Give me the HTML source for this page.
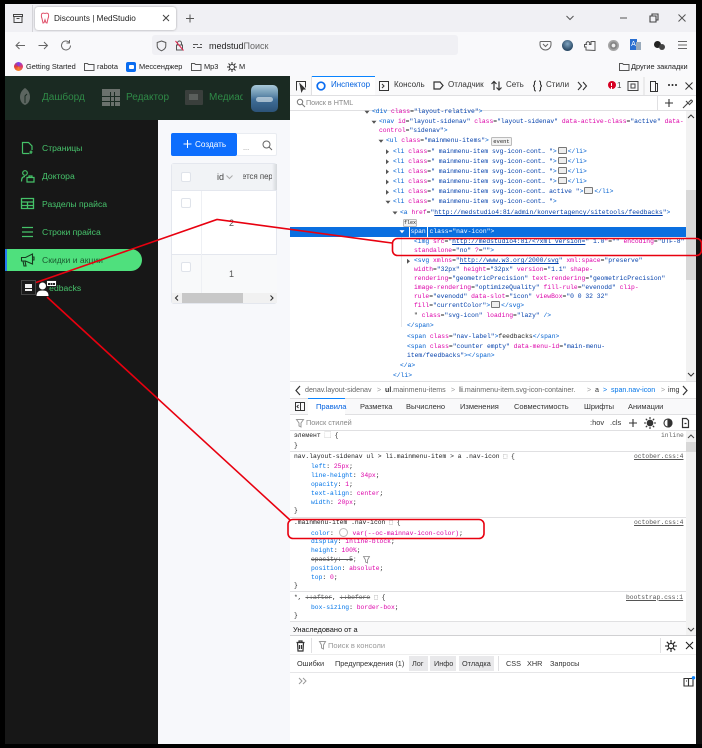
<!DOCTYPE html>
<html lang="ru"><head><meta charset="utf-8"><title>Discounts | MedStudio</title>
<style>
html,body{margin:0;padding:0;background:#000;width:702px;height:748px;overflow:hidden}
#p{position:relative;width:702px;height:748px;overflow:hidden;font-family:"Liberation Sans","Noto Sans CJK SC",sans-serif;filter:blur(.25px)}
.b{position:absolute}
.t{position:absolute;white-space:nowrap;line-height:10px;font-size:7.4px;color:#333}
.m{position:absolute;white-space:nowrap;line-height:10px;height:10px;font:6.35px/10px "Liberation Mono",monospace;color:#222}
.n{color:#0060d0}.a{color:#dd00a9}.v{color:#003eaa}.u{text-decoration:underline;color:#003eaa}.g{color:#666}
.bl{color:#0074e8}
.x{display:inline-block;width:7px;height:5px;border:.7px solid #777;border-radius:1px;background:#eee;vertical-align:-1px;margin:0 1px}
.side{position:absolute;left:42px;font-size:8.6px;line-height:12px;color:#47c46c;white-space:nowrap}
.top{position:absolute;font-size:10px;line-height:12px;color:#2f8a47;white-space:nowrap}
svg{position:absolute;overflow:visible}
.c{position:absolute;background:#fff;border:1px solid #dfe3ea;border-radius:2px;width:8px;height:8px}
.sep{position:absolute;left:290px;width:396px;height:1px;background:#e0e0e2}
.dt{font-size:8px;top:80px}
.bc{font-size:7.1px;top:385px;color:#666}
.rt{font-size:7.5px;top:402px}
.cf{font-size:7.3px;top:659px}
</style></head><body><div id="p">

<!-- browser chrome -->
<div class="b" style="left:5px;top:4px;width:691px;height:28px;background:#f0f0f4"></div>
<div class="b" style="left:5px;top:32px;width:691px;height:44px;background:#f9f9fb"></div>
<div class="b" style="left:32px;top:5px;width:1px;height:27px;background:#d4d4d8"></div>
<div class="b" style="left:152px;top:35px;width:306px;height:20px;background:#f0f0f4;border-radius:3px"></div>
<svg style="left:0;top:0" width="702" height="76" fill="none" stroke="#444" stroke-width="1">
 <path d="M13.500 14.500h9v2h-9zM14 16.500v6h8v-6M16.500 18.500h3"/>
 <path d="M186 18.500h8M190 14.500v8" stroke="#555"/>
 <path d="M566.500 16l3.500 3.500 3.500-3.500" stroke="#555"/>
 <path d="M620 18h7" stroke="#555"/>
 <path d="M650 16h6v6h-6zM652 16v-2h6v6h-2" stroke="#444" stroke-width="1.100"/>
 <path d="M678.500 14.500l7 7M685.500 14.500l-7 7" stroke="#555"/>
 <path d="M25 45.500h-9M19.500 42l-3.500 3.500 3.500 3.500M38.500 45.500h9M44 42l3.500 3.500-3.500 3.500" stroke="#666"/>
 <path d="M70.500 45.500a4.500 4.500 0 1 1-1.500-3.400M69.500 40v3h-3" stroke="#666"/>
 <path d="M161.500 41l4.300 1.500v3.500c0 2.500-2 3.800-4.300 4.800-2.300-1-4.300-2.300-4.300-4.800v-3.500z" stroke="#555"/>
 <path d="M176.500 45h6v5h-6zM177.500 45v-2a2 2 0 0 1 4 0v2" stroke="#555"/>
 <path d="M175.500 41l8 9.500" stroke="#e22850"/>
 <path d="M193 44.500h5M200 44.500h2M193 47.500h2M197 47.500h5" stroke="#555"/>
 <path d="M541 41.500h9a1 1 0 0 1 1 1v2a5.500 5.500 0 0 1-11 0v-2a1 1 0 0 1 1-1zM543 44l2.500 2.500 2.500-2.500" stroke="#666"/>
 <path d="M586 50v-3h-1.500v-2.500h2a1.800 1.800 0 1 1 3 0h1.500v-3h4v9z" stroke="#555"/>
 <path d="M678 41.500h9M678 45h9M678 48.500h9" stroke="#666"/>
</svg>
<div class="b" style="left:35px;top:7px;width:141px;height:23px;background:#fff;border-radius:3px;box-shadow:0 0 2px rgba(0,0,0,.35)"></div>
<svg style="left:40px;top:12px" width="10" height="13" fill="none" stroke="#e0506a" stroke-width="1"><path d="M2 1.500c1.500-.8 2-.3 3 0 1-.3 1.500-.8 3 0 1 1 .7 3.500 0 5l-1 4.500-1-.3-1-3-1 3-1 .3-1-4.500c-.7-1.500-1-4 0-5z"/></svg>
<div class="t" style="left:54px;top:14px;font-size:8.200px;line-height:10px;color:#222">Discounts | MedStudio</div>
<svg style="left:162px;top:14px" width="9" height="9" fill="none" stroke="#444" stroke-width="1"><path d="M1 1l6 6M7 1l-6 6"/></svg>

<div class="t" style="left:209px;top:41px;font-size:9px;color:#222">medstud<span style="color:#666">Поиск</span></div>
<div class="b" style="left:562px;top:40px;width:11px;height:11px;border-radius:50%;background:radial-gradient(circle at 50% 35%,#7fa3c0,#2b4a66 70%)"></div>
<div class="b" style="left:608px;top:40px;width:11px;height:11px;border-radius:50%;background:radial-gradient(circle,#eee 0 20%,#777 30%,#aaa 60%,#888)"></div>
<div class="b" style="left:630px;top:39px;width:7px;height:11px;background:#2a6fd0;color:#fff;font-size:7px;line-height:11px;text-align:center">A</div>
<div class="b" style="left:636px;top:42px;width:5px;height:8px;background:#9ab;"></div>
<div class="b" style="left:654px;top:41px;width:7px;height:7px;border-radius:50%;background:#222"></div>
<div class="b" style="left:659px;top:44px;width:6px;height:6px;border-radius:50%;background:#444"></div>

<div class="b" style="left:14px;top:62px;width:9px;height:9px;border-radius:50%;background:conic-gradient(#7b3ff2,#e23a6a,#f58a2a,#e23a3a,#7b3ff2)"></div>
<div class="t" style="left:26px;top:62px;color:#222">Getting Started</div>
<svg style="left:84px;top:62px" width="11" height="10" fill="none" stroke="#555"><path d="M.5 8.500v-7h3l1 1h5.500v6z"/></svg>
<div class="t" style="left:97px;top:62px;color:#222">rabota</div>
<div class="b" style="left:126px;top:62px;width:10px;height:10px;border-radius:2px;background:#0a6cf0"></div>
<div class="b" style="left:128.500px;top:64.500px;width:5px;height:4px;background:#fff;border-radius:1px"></div>
<div class="t" style="left:139px;top:62px;color:#222">Мессенджер</div>
<svg style="left:191px;top:62px" width="11" height="10" fill="none" stroke="#555"><path d="M.5 8.500v-7h3l1 1h5.500v6z"/></svg>
<div class="t" style="left:204px;top:62px;color:#222">Mp3</div>
<svg style="left:227px;top:62px" width="10" height="10" fill="none" stroke="#333"><circle cx="5" cy="5" r="2.500"/><path d="M5 0v2M5 8v2M0 5h2M8 5h2M1.500 1.500l1.500 1.500M7 7l1.500 1.500M8.500 1.500L7 3M3 7L1.500 8.500"/></svg>
<div class="t" style="left:239px;top:62px;color:#222">M</div>
<svg style="left:619px;top:62px" width="11" height="10" fill="none" stroke="#555"><path d="M.5 8.500v-7h3l1 1h5.500v6z"/></svg>
<div class="t" style="left:631px;top:62px;color:#222">Другие закладки</div>

<!-- app -->
<div class="b" style="left:5px;top:76px;width:285px;height:44px;background:#1a2a22"></div>
<div class="b" style="left:5px;top:120px;width:153px;height:624px;background:#171717"></div>
<div class="b" style="left:158px;top:120px;width:132px;height:624px;background:#f7f8fb"></div>

<svg style="left:20px;top:87px" width="10" height="20"><path d="M5 1c3 2 5 5 5 9s-2 7-5 8c-3-1-5-4-5-8s2-7 5-9z" fill="#5c6560"/><path d="M5 16V9l2-2" stroke="#1a2a22" fill="none"/></svg>
<div class="top" style="left:42px;top:92px">Дашборд</div>
<div class="b" style="left:102px;top:89px;width:18px;height:17px;background:#6b716d"></div>
<div class="b" style="left:110px;top:92px;width:1px;height:14px;background:#1a2a22"></div>
<div class="b" style="left:114px;top:92px;width:1px;height:14px;background:#1a2a22"></div>
<div class="b" style="left:102px;top:96px;width:18px;height:1px;background:#1a2a22"></div>
<div class="b" style="left:102px;top:101px;width:18px;height:1px;background:#1a2a22"></div>
<div class="top" style="left:126px;top:92px">Редактор</div>
<div class="b" style="left:185px;top:90px;width:18px;height:15px;background:#3a3f3c;border-radius:1px"></div>
<div class="b" style="left:189px;top:94px;width:9px;height:6px;background:#5a5f5c"></div>
<div class="b" style="left:209px;top:90px;width:34px;height:16px;overflow:hidden"><div class="top" style="left:0;top:2px">Медиафайлы</div></div>
<div class="b" style="left:251px;top:85px;width:27px;height:27px;border-radius:5px;background:linear-gradient(#a8c8d8 0,#6a93b0 35%,#3f6d96 55%,#2c5378 100%)"></div>
<div class="b" style="left:256px;top:97px;width:17px;height:5px;border-radius:3px;background:#cfdde6;opacity:.7"></div>

<!-- side menu -->
<svg style="left:0;top:120px" width="40" height="180" fill="none" stroke="#45c268" stroke-width="1.200">
 <path d="M22.500 33.500v-11h6l3.500 3.500v4M22.500 33.500h7M31 30.500v3.500M29.500 32h3"/>
 <circle cx="25" cy="53" r="2.300"/>
 <path d="M21.500 61.500c0-3.500 1.500-5 3.500-5M27 57.500h7v4.500h-7zM29 57.500V56h3v1.500"/>
 <path d="M21.500 78.500h12v10h-12zM21.500 82h12M21.500 85.500h12M27.500 82v6.500" stroke-width="1.300"/>
 <path d="M22 107.500h11M22 112h11M22 116.500h11" stroke-width="1.300"/>
</svg>
<div class="side" style="top:142px">Страницы</div>
<div class="side" style="top:170px">Доктора</div>
<div class="side" style="top:198px">Разделы прайса</div>
<div class="side" style="top:226px">Строки прайса</div>
<div class="b" style="left:5px;top:249px;width:137px;height:22px;background:#4fe07d;border-radius:0 11px 11px 0"></div>
<div class="b" style="left:5px;top:249px;width:2px;height:22px;background:#2478f0"></div>
<svg style="left:20px;top:253px" width="15" height="15" fill="none" stroke="#17391f" stroke-width="1.100"><path d="M1.500 4.500h4l7-3.500v10l-7-3h-4zM3 8l1 5h2l-1-5M12.500 4h1.500v3h-1.500"/></svg>
<div class="side" style="top:254px;color:#1b5a30">Скидки и акции</div>
<div class="side" style="top:282px">feedbacks</div>

<!-- pasted icons over feedbacks -->
<div class="b" style="left:21px;top:280px;width:15px;height:15px;background:#1a1a1a;border:1px solid #444;box-sizing:border-box"></div>
<div class="b" style="left:25px;top:284px;width:7px;height:7px;background:#f0f0f0"></div>
<div class="b" style="left:25px;top:288px;width:7px;height:1px;background:#222"></div>
<div class="b" style="left:36px;top:280px;width:13px;height:17px;background:#1a1a1a"></div>
<svg style="left:36px;top:282px" width="14" height="15"><circle cx="6.500" cy="4" r="3.500" fill="#fff"/><path d="M.5 14c0-4 2-5.500 6-5.500s6 1.500 6 5.500z" fill="#fff"/></svg>
<div class="b" style="left:46px;top:280px;width:11px;height:7px;background:#fff;border-radius:1px;border:1px solid #222;box-sizing:border-box"></div>
<div class="b" style="left:48px;top:283px;width:1.500px;height:1.500px;background:#222;box-shadow:2.500px 0 #222,5px 0 #222"></div>

<!-- content -->
<div class="b" style="left:171px;top:133px;width:66px;height:23px;background:#0d6efd;border-radius:2px"></div>
<svg style="left:183px;top:140px" width="9" height="9" stroke="#fff" stroke-width="1"><path d="M4.500 0v8M.5 4h8"/></svg>
<div class="t" style="left:195px;top:140px;color:#fff;font-size:8.200px">Создать</div>
<div class="b" style="left:237px;top:133px;width:40px;height:23px;background:#fff;border:1px solid #e9ecf1;border-left:0;box-sizing:border-box;border-radius:0 2px 2px 0"></div>
<div class="t" style="left:243px;top:143px;color:#888">...</div>
<svg style="left:262px;top:140px" width="11" height="11" fill="none" stroke="#666"><circle cx="4.500" cy="4.500" r="3.500"/><path d="M7 7l3 3"/></svg>

<div class="b" style="left:171px;top:163px;width:106px;height:141px;background:#fff;border:1px solid #e4e7ee;box-sizing:border-box;border-radius:3px"></div>
<div class="b" style="left:172px;top:164px;width:105px;height:26px;background:#f1f3f6"></div>
<div class="b" style="left:172px;top:190px;width:105px;height:1px;background:#e4e7ee"></div>
<div class="b" style="left:172px;top:255px;width:105px;height:38px;background:#f8f9fa"></div>
<div class="b" style="left:172px;top:254px;width:105px;height:1px;background:#e4e7ee"></div>
<div class="b" style="left:201px;top:191px;width:1px;height:102px;background:#eef0f4"></div>
<div class="b" style="left:272px;top:164px;width:5px;height:26px;background:linear-gradient(90deg,#f1f3f6,#d4d7db)"></div>
<div class="c" style="left:181px;top:172px"></div>
<div class="c" style="left:181px;top:198px"></div>
<div class="c" style="left:181px;top:262px"></div>
<div class="t" style="left:217px;top:172px;font-size:9px;color:#444">id</div>
<svg style="left:226px;top:175px" width="8" height="5" fill="none" stroke="#aaa"><path d="M.5.500l3 3 3-3"/></svg>
<div class="b" style="left:243px;top:171px;width:29px;height:12px;overflow:hidden"><div class="t" style="left:-1px;top:1px;font-size:7.800px;color:#444">ется перв</div></div>
<div class="t" style="left:229px;top:218px;font-size:9px;color:#555">2</div>
<div class="t" style="left:229px;top:269px;font-size:9px;color:#555">1</div>
<div class="b" style="left:172px;top:293px;width:105px;height:10px;background:#f1f1f1"></div>
<div class="b" style="left:182px;top:293px;width:61px;height:10px;background:#c8c8c8"></div>
<svg style="left:173px;top:294px" width="104" height="8" fill="none" stroke="#333" stroke-width="1.100"><path d="M5 1.500L2.500 4 5 6.500M97.500 1.500L100 4l-2.500 2.500"/></svg>

<!-- devtools -->
<div class="b" style="left:290px;top:76px;width:406px;height:668px;background:#fff"></div>
<div class="b" style="left:290px;top:76px;width:406px;height:19px;background:#f9f9fa"></div>
<div class="b" style="left:290px;top:95px;width:406px;height:1px;background:#e0e0e2"></div>
<div class="b" style="left:311px;top:76px;width:64px;height:19px;background:#fff;border-top:1px solid #0a84ff;box-sizing:border-box"></div>
<div class="b" style="left:311px;top:76px;width:1px;height:19px;background:#e0e0e2"></div>
<svg style="left:290px;top:76px" width="406" height="34" fill="none" stroke="#333" stroke-width="1">
 <path d="M6.500 14.500v-9h9v6"/><path d="M10 8l5 5-2.200.2-1.200 2.300z" fill="#333"/>
 <circle cx="31" cy="10" r="3.800" stroke="#0a6cf0" stroke-width="1.700"/>
 <path d="M89.500 5.500h9v9h-9zM92 8l2 2-2 2"/>
 <path d="M144 6h6l3 3.500-3 3.500h-6z" stroke-width="1.200"/>
 <path d="M204 14V5.500M201.500 8l2.500-2.500L206.500 8M209 5.500V14M206.500 11.500l2.500 2.500 2.500-2.500" stroke-width="1.200"/>
 <path d="M246 5c-2 0-1.500 2-1.500 3s-1 1.500-1 2 1 .8 1 2-.5 3 1.500 3M249 5c2 0 1.500 2 1.500 3s1 1.500 1 2-1 .8-1 2 .5 3-1.500 3" stroke-width="1.100"/>
 <path d="M288 6l3.500 4-3.500 4M293 6l3.500 4-3.500 4" stroke-width="1.100"/>
 <path d="M338 5.500h10v9h-10zM341 8h4v4h-4z" stroke="#444"/>
 <path d="M354 1v18" stroke="#ddd"/>
 <path d="M360.500 5.500h5v10h-5zM365.500 7.500h2v8h-2"/>
 <path d="M395.500 6.500l7 7M402.500 6.500l-7 7"/>
</svg>
<div class="b" style="left:607.500px;top:81px;width:8px;height:8px;border-radius:50%;background:#d70022"></div>
<div class="b" style="left:611px;top:82.500px;width:1px;height:3px;background:#fff;box-shadow:0 4px #fff"></div>
<div class="t" style="left:617px;top:81px;font-size:8px;color:#444">1</div>
<div class="b" style="left:668px;top:84px;width:2px;height:2px;border-radius:50%;background:#222;box-shadow:3.500px 0 #222,7px 0 #222"></div>
<div class="t dt" style="left:331px;color:#0060df">Инспектор</div>
<div class="t dt" style="left:394px">Консоль</div>
<div class="t dt" style="left:448px">Отладчик</div>
<div class="t dt" style="left:506px">Сеть</div>
<div class="t dt" style="left:546px">Стили</div>

<svg style="left:296px;top:98px" width="10" height="10" fill="none" stroke="#777"><circle cx="4" cy="4" r="2.700"/><path d="M6 6l3 3"/></svg>
<div class="t" style="left:306px;top:98px;color:#888;font-size:7.200px">Поиск в HTML</div>
<div class="b" style="left:657px;top:96px;width:1px;height:14px;background:#e0e0e2"></div>
<svg style="left:664px;top:97px" width="32" height="12" fill="none" stroke="#333" stroke-width="1.100"><path d="M1 6h8M5 2v8"/><path d="M19 11l5-5M22 4l4 4M24.500 5.500l2-2a1 1 0 0 1 1.500 1.500l-2 2" stroke="#444"/></svg>
<div class="b" style="left:290px;top:110px;width:406px;height:1px;background:#e0e0e2"></div>

<!-- markup -->
<div class="b" style="left:290px;top:227px;width:396px;height:10px;background:#0a6fe0"></div>
<div class="b" style="left:408.500px;top:227px;width:1px;height:10px;background:#fff"></div>
<div class="b" style="left:427px;top:227px;width:1px;height:10px;background:#fff"></div>
<div class="b" style="left:401px;top:237px;width:1px;height:90px;background:#e8e8ea"></div>
<svg style="left:290px;top:110px" width="130" height="260" fill="#555">
 <path d="M74.500.8h5L77 3.800zM81.500 10.800h5L84 13.800zM88.500 29.800h5L91 32.800zM95.500 90.800h5L98 93.800zM102.500 101.500h5L105 104.500z"/>
 <path d="M96 39.200v5l3-2.500zM96 49.200v5l3-2.500zM96 59.200v5l3-2.500zM96 69.500v5l3-2.500zM96 79.800v5l3-2.500z"/>
 <path d="M109.500 120.200h5L112 123.200z" fill="#fff"/>
 <path d="M117 148.800v5l3-2.500z"/>
</svg>
<div class="m" style="left:372px;top:107px"><span class="n">&lt;div</span> <span class="a">class</span>=<span class="v">"layout-relative"</span><span class="n">&gt;</span></div>
<div class="m" style="left:379px;top:117px"><span class="n">&lt;nav</span> <span class="a">id</span>=<span class="v">"layout-sidenav"</span> <span class="a">class</span>=<span class="v">"layout-sidenav"</span> <span class="a">data-active-class</span>=<span class="v">"active"</span> <span class="a">data-</span></div>
<div class="m" style="left:379px;top:126px"><span class="a">control</span>=<span class="v">"sidenav"</span><span class="n">&gt;</span></div>
<div class="m" style="left:386px;top:136px"><span class="n">&lt;ul</span> <span class="a">class</span>=<span class="v">"mainmenu-items"</span><span class="n">&gt;</span></div>
<div class="b" style="left:491px;top:137px;width:19px;height:7px;border:.7px solid #bbb;border-radius:1.500px;background:#f2f2f2;font:5.500px/7px 'Liberation Mono',monospace;text-align:center;color:#222">event</div>
<div class="m" style="left:393px;top:146.500px"><span class="n">&lt;li</span> <span class="a">class</span>=<span class="v">" mainmenu-item svg-icon-cont… "</span><span class="n">&gt;</span><span class="x"></span><span class="n">&lt;/li&gt;</span></div>
<div class="m" style="left:393px;top:156.500px"><span class="n">&lt;li</span> <span class="a">class</span>=<span class="v">" mainmenu-item svg-icon-cont… "</span><span class="n">&gt;</span><span class="x"></span><span class="n">&lt;/li&gt;</span></div>
<div class="m" style="left:393px;top:166.500px"><span class="n">&lt;li</span> <span class="a">class</span>=<span class="v">" mainmenu-item svg-icon-cont… "</span><span class="n">&gt;</span><span class="x"></span><span class="n">&lt;/li&gt;</span></div>
<div class="m" style="left:393px;top:177px"><span class="n">&lt;li</span> <span class="a">class</span>=<span class="v">" mainmenu-item svg-icon-cont… "</span><span class="n">&gt;</span><span class="x"></span><span class="n">&lt;/li&gt;</span></div>
<div class="m" style="left:393px;top:187px"><span class="n">&lt;li</span> <span class="a">class</span>=<span class="v">" mainmenu-item svg-icon-cont… active "</span><span class="n">&gt;</span><span class="x"></span><span class="n">&lt;/li&gt;</span></div>
<div class="m" style="left:393px;top:197px"><span class="n">&lt;li</span> <span class="a">class</span>=<span class="v">" mainmenu-item svg-icon-cont… "</span><span class="n">&gt;</span></div>
<div class="m" style="left:400px;top:208px"><span class="n">&lt;a</span> <span class="a">href</span>=<span class="v">"</span><span class="u">http://medstudio4:81/admin/konvertagency/sitetools/feedbacks</span><span class="v">"</span><span class="n">&gt;</span></div>
<div class="b" style="left:403px;top:218.500px;width:12px;height:6px;border:.7px solid #bbb;border-radius:1.500px;background:#f2f2f2;font:5px/6px 'Liberation Mono',monospace;text-align:center;color:#222">flex</div>
<div class="m" style="left:410.500px;top:227px;color:#fff">span class="nav-icon"&gt;</div>
<div class="m" style="left:414px;top:237px"><span class="n">&lt;img</span> <span class="a">src</span>=<span class="v">"</span><span class="u">http://medstudio4:81/&lt;?xml version=</span><span class="v">"</span> <span class="v">1.0</span><span class="a">"</span>=<span class="v">""</span> <span class="a">encoding</span>=<span class="v">"UTF-8"</span></div>
<div class="m" style="left:414px;top:246px"><span class="a">standalone</span>=<span class="v">"no"</span> <span class="a">?</span>=<span class="v">""</span><span class="n">&gt;</span></div>
<div class="m" style="left:414px;top:256px"><span class="n">&lt;svg</span> <span class="a">xmlns</span>=<span class="v">"</span><span class="u">http://www.w3.org/2000/svg</span><span class="v">"</span> <span class="a">xml:space</span>=<span class="v">"preserve"</span></div>
<div class="m" style="left:414px;top:265px"><span class="a">width</span>=<span class="v">"32px"</span> <span class="a">height</span>=<span class="v">"32px"</span> <span class="a">version</span>=<span class="v">"1.1"</span> <span class="a">shape-</span></div>
<div class="m" style="left:414px;top:274px"><span class="a">rendering</span>=<span class="v">"geometricPrecision"</span> <span class="a">text-rendering</span>=<span class="v">"geometricPrecision"</span></div>
<div class="m" style="left:414px;top:283px"><span class="a">image-rendering</span>=<span class="v">"optimizeQuality"</span> <span class="a">fill-rule</span>=<span class="v">"evenodd"</span> <span class="a">clip-</span></div>
<div class="m" style="left:414px;top:292px"><span class="a">rule</span>=<span class="v">"evenodd"</span> <span class="a">data-slot</span>=<span class="v">"icon"</span> <span class="a">viewBox</span>=<span class="v">"0 0 32 32"</span></div>
<div class="m" style="left:414px;top:301px"><span class="a">fill</span>=<span class="v">"currentColor"</span><span class="n">&gt;</span><span class="x"></span><span class="n">&lt;/svg&gt;</span></div>
<div class="m" style="left:414px;top:311px">" <span class="a">class</span>=<span class="v">"svg-icon"</span> <span class="a">loading</span>=<span class="v">"lazy"</span> <span class="n">/&gt;</span></div>
<div class="m" style="left:407px;top:321px"><span class="n">&lt;/span&gt;</span></div>
<div class="m" style="left:407px;top:331.500px"><span class="n">&lt;span</span> <span class="a">class</span>=<span class="v">"nav-label"</span><span class="n">&gt;</span>feedbacks<span class="n">&lt;/span&gt;</span></div>
<div class="m" style="left:407px;top:341.500px"><span class="n">&lt;span</span> <span class="a">class</span>=<span class="v">"counter empty"</span> <span class="a">data-menu-id</span>=<span class="v">"main-menu-</span></div>
<div class="m" style="left:407px;top:350.500px"><span class="v">item/feedbacks"</span><span class="n">&gt;&lt;/span&gt;</span></div>
<div class="m" style="left:400px;top:361px"><span class="n">&lt;/a&gt;</span></div>
<div class="m" style="left:393px;top:371px"><span class="n">&lt;/li&gt;</span></div>

<div class="b" style="left:686px;top:111px;width:10px;height:270px;background:#f2f2f2"></div>
<div class="b" style="left:686px;top:190px;width:10px;height:90px;background:#d8d8d8"></div>
<svg style="left:686px;top:113px" width="10" height="268" fill="none" stroke="#333"><path d="M2 5l3-3 3 3M2 260l3 3 3-3"/></svg>

<!-- breadcrumbs -->
<div class="b" style="left:290px;top:381px;width:406px;height:1px;background:#e0e0e2"></div>
<div class="b" style="left:290px;top:382px;width:406px;height:16px;background:#fff"></div>
<svg style="left:294px;top:385px" width="400" height="11" fill="none" stroke="#333" stroke-width="1.200"><path d="M6 1L2 5.500 6 10M389 1l4 4.500-4 4.500"/></svg>
<div class="t bc" style="left:305px">denav.layout-sidenav</div>
<div class="t bc" style="left:377px;color:#999">&gt;</div>
<div class="t bc" style="left:385px"><b style="color:#333">ul</b>.mainmenu-items</div>
<div class="t bc" style="left:451px;color:#999">&gt;</div>
<div class="t bc" style="left:459px"><b>li</b>.mainmenu-item.svg-icon-container.</div>
<div class="t bc" style="left:587px;color:#999">&gt;</div>
<div class="t bc" style="left:595px;color:#333">a</div>
<div class="t bc" style="left:603px;color:#0074e8">&gt;</div>
<div class="t bc" style="left:611px;color:#0074e8">span.nav-icon</div>
<div class="t bc" style="left:661px;color:#999">&gt;</div>
<div class="t bc" style="left:668px;color:#333">img</div>

<!-- rules tabs -->
<div class="b" style="left:290px;top:398px;width:406px;height:17px;background:#f9f9fa;border-top:1px solid #e0e0e2;border-bottom:1px solid #e0e0e2;box-sizing:border-box"></div>
<div class="b" style="left:308px;top:398px;width:37px;height:17px;background:#fff;border-top:1px solid #0a84ff;box-sizing:border-box"></div>
<svg style="left:295px;top:402px" width="10" height="9" fill="none" stroke="#333"><path d="M.5.500h9v8h-9zM5.500.500v8M3.500 3L2 4.500 3.500 6"/></svg>
<div class="t rt" style="left:316px;color:#0060df">Правила</div>
<div class="t rt" style="left:360px">Разметка</div>
<div class="t rt" style="left:406px">Вычислено</div>
<div class="t rt" style="left:460px">Изменения</div>
<div class="t rt" style="left:514px">Совместимость</div>
<div class="t rt" style="left:584px">Шрифты</div>
<div class="t rt" style="left:628px">Анимации</div>

<svg style="left:296px;top:419px" width="9" height="9" fill="none" stroke="#999"><path d="M.5.500h7L5 4v4L3 7V4z"/></svg>
<div class="t" style="left:306px;top:418px;color:#888;font-size:7.300px">Поиск стилей</div>
<div class="t" style="left:590px;top:418px;font-size:7.500px">:hov</div>
<div class="t" style="left:610px;top:418px;font-size:7.500px">.cls</div>
<svg style="left:628px;top:417px" width="62" height="12" fill="none" stroke="#333" stroke-width="1.100">
 <path d="M1 6h8M5 2v8"/>
 <circle cx="22" cy="6" r="2.800" fill="#333"/><path d="M22 0v2M22 10v2M16 6h2M26 6h2M17.800 1.800l1.400 1.400M24.800 8.800l1.400 1.400M26.200 1.800l-1.400 1.400M19.200 8.800l-1.400 1.400"/>
 <circle cx="40" cy="6" r="4"/><path d="M40 2a4 4 0 0 1 0 8z" fill="#333"/>
 <path d="M54.500 1.500h4l2 2v7h-6zM56.500 6.500h2" stroke-width="1.200"/>
</svg>
<div class="sep" style="top:430px;width:406px"></div>

<!-- rules -->
<div class="m" style="left:294px;top:431px;font-family:'Liberation Mono','Noto Sans CJK SC',monospace">элемент <span class="g">⬚</span> {</div>
<div class="m" style="left:661px;top:431px;color:#666">inline</div>
<div class="m" style="left:294px;top:440.700px">}</div>
<div class="sep" style="top:451px"></div>
<div class="m" style="left:294px;top:452.300px">nav.layout-sidenav ul &gt; li.mainmenu-item &gt; a .nav-icon <span class="g">⬚</span> {</div>
<div class="m" style="left:634px;top:452.300px;text-decoration:underline;color:#555">october.css:4</div>
<div class="m" style="left:311px;top:462.300px"><span class="bl">left</span>: <span class="a">25px</span>;</div>
<div class="m" style="left:311px;top:471.300px"><span class="bl">line-height</span>: <span class="a">34px</span>;</div>
<div class="m" style="left:311px;top:480.300px"><span class="bl">opacity</span>: <span class="a">1</span>;</div>
<div class="m" style="left:311px;top:489.300px"><span class="bl">text-align</span>: <span class="a">center</span>;</div>
<div class="m" style="left:311px;top:498.300px"><span class="bl">width</span>: <span class="a">20px</span>;</div>
<div class="m" style="left:294px;top:506px">}</div>
<div class="sep" style="top:517px"></div>
<div class="m" style="left:294px;top:518.300px">.mainmenu-item .nav-icon <span class="g">⬚</span> {</div>
<div class="m" style="left:634px;top:518.300px;text-decoration:underline;color:#555">october.css:4</div>
<div class="m" style="left:311px;top:528.300px"><span class="bl">color</span>: <span style="display:inline-block;width:7px;height:7px;border:.7px solid #bbb;border-radius:50%;vertical-align:-2px;margin:0 1px"></span> <span class="a">var(--oc-mainnav-icon-color)</span>;</div>
<div class="m" style="left:311px;top:537.300px"><span class="bl">display</span>: <span class="a">inline-block</span>;</div>
<div class="m" style="left:311px;top:546px"><span class="bl">height</span>: <span class="a">100%</span>;</div>
<div class="m" style="left:311px;top:555px;color:#555"><s>opacity: .5</s>;</div>
<svg style="left:363px;top:556px" width="8" height="8" fill="none" stroke="#888" stroke-width=".8"><path d="M.5.500h6L4.500 4v3l-2-1V4z"/></svg>
<div class="m" style="left:311px;top:563.700px"><span class="bl">position</span>: <span class="a">absolute</span>;</div>
<div class="m" style="left:311px;top:572.700px"><span class="bl">top</span>: <span class="a">0</span>;</div>
<div class="m" style="left:294px;top:581px">}</div>
<div class="sep" style="top:591px"></div>
<div class="m" style="left:294px;top:592.700px">*, <s class="g">::after</s>, <s class="g">::before</s> <span class="g">⬚</span> {</div>
<div class="m" style="left:626px;top:592.700px;text-decoration:underline;color:#555">bootstrap.css:1</div>
<div class="m" style="left:311px;top:602.700px"><span class="bl">box-sizing</span>: <span class="a">border-box</span>;</div>
<div class="m" style="left:294px;top:611px">}</div>
<div class="sep" style="top:621px"></div>
<div class="b" style="left:290px;top:622px;width:396px;height:13px;background:#f9f9fa"></div>
<div class="t" style="left:293px;top:625px;font-size:7.400px;color:#111">Унаследовано от a</div>

<div class="b" style="left:686px;top:431px;width:10px;height:204px;background:#f2f2f2"></div>
<div class="b" style="left:686px;top:442px;width:10px;height:10px;background:#d8d8d8"></div>
<svg style="left:686px;top:433px" width="10" height="202" fill="none" stroke="#444"><path d="M2 5l3-3 3 3M2 195l3 3 3-3"/></svg>

<!-- console -->
<div class="b" style="left:290px;top:635px;width:406px;height:1px;background:#d0d0d2"></div>
<svg style="left:296px;top:640px" width="10" height="12" fill="none" stroke="#333" stroke-width="1.200"><path d="M.5 2.500h8M3 2.500V1h3v1.500M1.500 2.500l.5 8.500h5l.5-8.500M3.500 5v4M5.500 5v4"/></svg>
<div class="b" style="left:311px;top:638px;width:1px;height:15px;background:#e0e0e2"></div>
<svg style="left:319px;top:641px" width="9" height="9" fill="none" stroke="#999"><path d="M.5.500h6L4.500 4v4l-2-1V4z"/></svg>
<div class="t" style="left:328px;top:641px;color:#999;font-size:7.500px">Поиск в консоли</div>
<div class="b" style="left:660px;top:638px;width:1px;height:15px;background:#e0e0e2"></div>
<svg style="left:665px;top:640px" width="27" height="12" fill="none" stroke="#222" stroke-width="1.100"><circle cx="6" cy="6" r="2.600"/><path d="M6 0v3M6 9v3M0 6h3M9 6h3M1.800 1.800l2 2M8.200 8.200l2 2M10.200 1.800l-2 2M3.800 8.200l-2 2"/><path d="M21 2l7 7M28 2l-7 7"/></svg>
<div class="b" style="left:290px;top:654px;width:406px;height:1px;background:#eee"></div>
<div class="b" style="left:409px;top:656px;width:19px;height:15px;background:#e9e9eb"></div>
<div class="b" style="left:430px;top:656px;width:26px;height:15px;background:#e9e9eb"></div>
<div class="b" style="left:459px;top:656px;width:35px;height:15px;background:#e9e9eb"></div>
<div class="b" style="left:498px;top:656px;width:1px;height:15px;background:#e0e0e2"></div>
<div class="t cf" style="left:297px">Ошибки</div>
<div class="t cf" style="left:335px">Предупреждения (1)</div>
<div class="t cf" style="left:412px">Лог</div>
<div class="t cf" style="left:434px">Инфо</div>
<div class="t cf" style="left:462px">Отладка</div>
<div class="t cf" style="left:506px">CSS</div>
<div class="t cf" style="left:527px">XHR</div>
<div class="t cf" style="left:550px">Запросы</div>
<div class="b" style="left:290px;top:672px;width:406px;height:1px;background:#e6e6e8"></div>
<svg style="left:298px;top:677px" width="9" height="8" fill="none" stroke="#999"><path d="M1 1l3 3-3 3M5 1l3 3-3 3"/></svg>
<svg style="left:683px;top:676px" width="13" height="11" fill="none" stroke="#333" stroke-width="1.100"><path d="M1 2.500h9v7.500H1zM5.500 2.500V10M3 5h1"/><circle cx="10.500" cy="1.800" r="1.700" fill="#0a84ff" stroke="none"/></svg>

<!-- red annotations -->
<svg style="left:0;top:0;z-index:5" width="702" height="748" fill="none" stroke="#e8000f" stroke-width="1.600">
 <path d="M36 282.500L217 219.500 392 243"/>
 <path d="M47 297L290 520"/>
 <rect x="392.500" y="238.500" width="309" height="17" rx="5"/>
 <rect x="288" y="519.500" width="196" height="19" rx="5"/>
</svg>

<!-- outer black -->
<div class="b" style="left:0;top:0;width:702px;height:4px;background:#000;z-index:6"></div>
<div class="b" style="left:0;top:0;width:5px;height:748px;background:#000;z-index:6"></div>
<div class="b" style="left:0;top:744px;width:702px;height:4px;background:#000;z-index:6"></div>
<div class="b" style="left:696px;top:4px;width:6px;height:235px;background:#000;z-index:4"></div>
<div class="b" style="left:696px;top:239px;width:6px;height:509px;background:#111;z-index:4"></div>
</div></body></html>
